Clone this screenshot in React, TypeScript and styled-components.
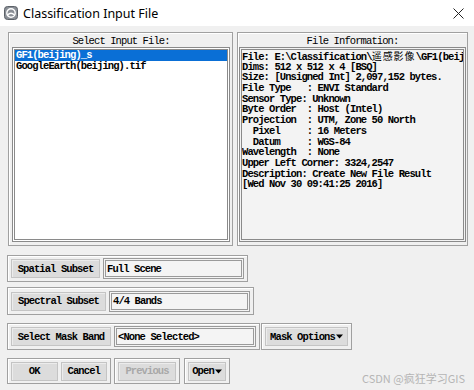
import React from 'react'
import styled, { createGlobalStyle } from 'styled-components'

const GlobalStyle = createGlobalStyle`
  * { box-sizing: border-box; }
  body { margin: 0; background: #f0f0f0; }
`

const mono = `"Liberation Mono", "Noto Sans CJK SC", monospace`

const Window = styled.div`
  position: relative;
  width: 474px;
  height: 390px;
  overflow: hidden;
  background: #f0f0f0;
  font-family: ${mono};
  font-size: 10.5px;
  letter-spacing: -0.9px;
  font-weight: bold;
  color: #000;
`

const TitleBar = styled.div`
  height: 26px;
  background: #fff;
  display: flex;
  align-items: center;
  padding-left: 4px;
`

const Title = styled.span`
  margin-left: 5px;
  font-family: "Noto Sans", "Open Sans", sans-serif;
  font-size: 12.5px;
  font-weight: normal;
  letter-spacing: 0;
  color: #000;
`

const CloseIcon = styled.svg`
  margin-left: auto;
  margin-right: 10px;
`

const TopPanels = styled.div`
  display: flex;
  gap: 4px;
  margin-top: 6px;
  padding-left: 8px;
  height: 214px;
`

const GroupBox = styled.div<{ $w: number; $pl: number; $pr: number }>`
  width: ${(p) => p.$w}px;
  display: flex;
  flex-direction: column;
  border: 1px solid #a0a0a0;
  box-shadow: inset 1px 1px 0 #fff;
  padding: 0 ${(p) => p.$pr}px 3px ${(p) => p.$pl}px;
`

const Heading = styled.div`
  height: 14px;
  line-height: 17px;
  text-align: center;
  font-weight: normal;
`

const ListBox = styled.div`
  flex: 1;
  background: #fff;
  border: 3px double #8a8a8a;
`

const ListItem = styled.div<{ $selected?: boolean }>`
  height: 10.5px;
  line-height: 10.5px;
  padding-left: 1px;
  white-space: nowrap;
  background: ${(p) => (p.$selected ? '#0a6fd6' : 'transparent')};
  color: ${(p) => (p.$selected ? '#fff' : '#000')};
`

const InfoArea = styled.div`
  flex: 1;
  background: #f3f3f3;
  border: 3px double #8a8a8a;
  padding: 1px 0 0 0;
  overflow: hidden;
`

const InfoLine = styled.div`
  height: 10.7px;
  line-height: 10.7px;
  white-space: pre;
`

const Cjk = styled.span`
  font-family: "Noto Sans CJK SC", sans-serif;
  font-size: 10px;
  line-height: 10px;
  letter-spacing: 1px;
  font-weight: normal;
`

const Row = styled.div<{ $mt: number }>`
  display: flex;
  gap: 1px;
  margin-top: ${(p) => p.$mt}px;
  padding-left: 7px;
`

const Frame = styled.div<{ $w: number; $h: number; $ml?: number }>`
  width: ${(p) => p.$w}px;
  height: ${(p) => p.$h}px;
  margin-left: ${(p) => p.$ml ?? 0}px;
  display: flex;
  align-items: center;
  gap: 3px;
  padding: 0 3px;
  border: 1px solid #a0a0a0;
  box-shadow: inset 1px 1px 0 #fff;
`

const Button = styled.button<{ $w: number }>`
  width: ${(p) => p.$w}px;
  height: 19px;
  padding: 0;
  display: flex;
  align-items: center;
  justify-content: center;
  gap: 1px;
  background: #dcdcdc;
  border: 1px solid #c4c4c4;
  box-shadow: inset 1px 1px 0 #ececec;
  font: inherit;
  letter-spacing: inherit;
  color: ${(p) => (p.disabled ? '#a8a8a8' : '#000')};
`

const Field = styled.div`
  flex: 1;
  height: 21px;
  display: flex;
  align-items: center;
  padding-left: 1px;
  background: #f4f4f4;
  border: 3px double #9a9a9a;
  white-space: nowrap;
`

const Watermark = styled.div`
  position: absolute;
  right: 9px;
  bottom: 4px;
  font-family: "Noto Sans CJK SC", sans-serif;
  font-size: 11px;
  font-weight: normal;
  letter-spacing: 0;
  color: #b5b5b5;
`

const Caret = () => (
  <svg width="7" height="5" viewBox="0 0 7 5">
    <path d="M0 0.5 H7 L3.5 4.5 Z" fill="#000" />
  </svg>
)

const AppIcon = () => (
  <svg width="14" height="14" viewBox="0 0 14 14">
    <rect x="0.5" y="0.5" width="13" height="13" rx="3" fill="#8a8f96" stroke="#5c6168" />
    <circle cx="7" cy="7" r="4.2" fill="none" stroke="#fff" strokeWidth="1.4" />
    <path d="M3.5 9 Q7 5.5 10.5 9" fill="none" stroke="#fff" strokeWidth="1.2" />
  </svg>
)

const files = ['GF1(beijing)_s', 'GoogleEarth(beijing).tif']

const info: React.ReactNode[] = [
  <>
    File: E:\Classification\<Cjk>遥感影像</Cjk>\GF1(beijing)_s
  </>,
  'Dims: 512 x 512 x 4 [BSQ]',
  'Size: [Unsigned Int] 2,097,152 bytes.',
  'File Type   : ENVI Standard',
  'Sensor Type: Unknown',
  'Byte Order  : Host (Intel)',
  'Projection  : UTM, Zone 50 North',
  '  Pixel     : 16 Meters',
  '  Datum     : WGS-84',
  'Wavelength  : None',
  'Upper Left Corner: 3324,2547',
  'Description: Create New File Result',
  '[Wed Nov 30 09:41:25 2016]',
]

export default function App() {
  return (
    <Window>
      <GlobalStyle />
      <TitleBar>
        <AppIcon />
        <Title>Classification Input File</Title>
        <CloseIcon width="11" height="11" viewBox="0 0 11 11">
          <path d="M0.5 0.5 L10.5 10.5 M10.5 0.5 L0.5 10.5" stroke="#222" strokeWidth="1" />
        </CloseIcon>
      </TitleBar>

      <TopPanels>
        <GroupBox $w={225} $pl={3} $pr={2}>
          <Heading>Select Input File:</Heading>
          <ListBox>
            {files.map((f, i) => (
              <ListItem key={f} $selected={i === 0}>
                {f}
              </ListItem>
            ))}
          </ListBox>
        </GroupBox>
        <GroupBox $w={231} $pl={1} $pr={1}>
          <Heading>File Information:</Heading>
          <InfoArea>
            {info.map((line, i) => (
              <InfoLine key={i}>{line}</InfoLine>
            ))}
          </InfoArea>
        </GroupBox>
      </TopPanels>

      <Row $mt={9}>
        <Frame $w={241} $h={27}>
          <Button $w={89}>Spatial Subset</Button>
          <Field>Full Scene</Field>
        </Frame>
      </Row>

      <Row $mt={5}>
        <Frame $w={247} $h={28}>
          <Button $w={95}>Spectral Subset</Button>
          <Field>4/4 Bands</Field>
        </Frame>
      </Row>

      <Row $mt={8}>
        <Frame $w={253} $h={27}>
          <Button $w={100}>Select Mask Band</Button>
          <Field>&lt;None Selected&gt;</Field>
        </Frame>
        <Frame $w={91} $h={27}>
          <Button $w={84}>
            Mask Options
            <Caret />
          </Button>
        </Frame>
      </Row>

      <Row $mt={8}>
        <Frame $w={104} $h={26}>
          <Button $w={47}>OK</Button>
          <Button $w={47}>Cancel</Button>
        </Frame>
        <Frame $w={66} $h={26} $ml={2}>
          <Button $w={58} disabled>
            Previous
          </Button>
        </Frame>
        <Frame $w={46} $h={26} $ml={3}>
          <Button $w={39}>
            Open
            <Caret />
          </Button>
        </Frame>
      </Row>

      <Watermark>CSDN @疯狂学习GIS</Watermark>
    </Window>
  )
}
